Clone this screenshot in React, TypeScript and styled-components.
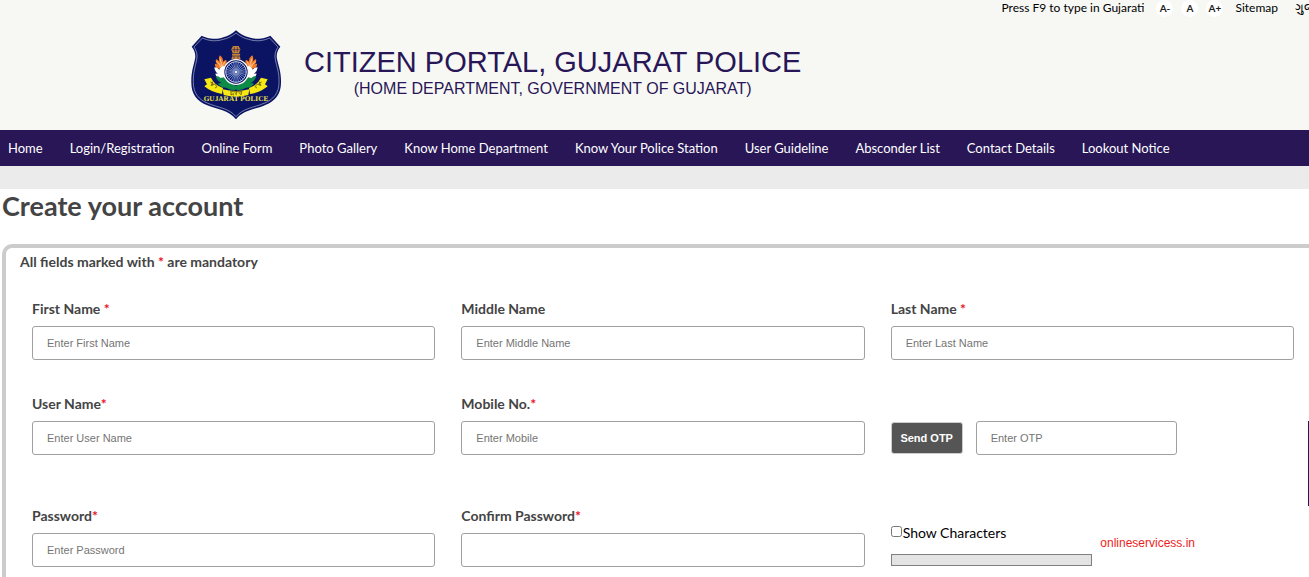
import React from "react";
import styled, { createGlobalStyle } from "styled-components";

const GlobalStyle = createGlobalStyle`
  *, *::before, *::after { box-sizing: border-box; }
  body {
    margin: 0;
    background: #fff;
    color: #000;
    font-family: Lato, "Noto Sans", sans-serif;
    font-size: 14px;
    overflow-x: hidden;
  }
`;

const navy = "#281657";

const Page = styled.div`
  overflow: hidden;
`;

const Header = styled.header`
  height: 130px;
  background: #f7f8f4;
`;

const TopBar = styled.div`
  display: flex;
  justify-content: flex-end;
  align-items: center;
  height: 16px;
  font-size: 12px;
  line-height: 16px;
  white-space: nowrap;
`;

const SizeButtons = styled.div`
  display: flex;
  gap: 8px;
  margin: 0 12px 0 12px;
`;

const SizeButton = styled.button`
  width: 17px;
  height: 17px;
  padding: 0;
  border: 0;
  border-radius: 50%;
  background: #fff;
  color: #222;
  font-family: inherit;
  font-size: 10px;
  font-weight: 700;
  line-height: 17px;
`;

const TopLink = styled.a`
  color: #000;
  text-decoration: none;
`;

const Language = styled(TopLink)`
  width: 14px;
  margin-left: 17px;
  overflow: hidden;
`;

const Brand = styled.div`
  display: flex;
  gap: 22px;
  padding: 12px 0 0 190px;
`;

const BrandText = styled.div`
  padding-top: 16px;
  color: ${navy};
  font-family: "Liberation Sans", sans-serif;
  text-align: center;
  white-space: nowrap;
`;

const BrandTitle = styled.div`
  font-size: 29px;
  line-height: 36px;
`;

const BrandSubtitle = styled.div`
  font-size: 16px;
  line-height: 18px;
`;

const Nav = styled.nav`
  display: flex;
  gap: 27px;
  height: 36px;
  padding-left: 8px;
  background: ${navy};
`;

const NavLink = styled.a`
  color: #fff;
  font-size: 13px;
  line-height: 36px;
  text-decoration: none;
  white-space: nowrap;
`;

const Strip = styled.div`
  height: 23px;
  background: #ebebeb;
`;

const Title = styled.h1`
  margin: 0 0 21px 2px;
  color: #444;
  font-size: 27px;
  font-weight: 700;
  line-height: 34px;
`;

const Panel = styled.form`
  margin-left: 2px;
  padding: 4px 15px 10px 26px;
  border: 4px solid #ccc;
  border-right: 0;
  border-bottom: 0;
  border-top-left-radius: 10px;
`;

const Note = styled.p`
  margin: 0 0 27px -12px;
  color: #444;
  font-size: 14px;
  font-weight: 700;
  line-height: 20px;
`;

const Required = styled.span`
  color: #e8142b;
`;

const Row = styled.div<{ $gap?: number }>`
  display: grid;
  grid-template-columns: repeat(3, 1fr);
  column-gap: 26px;
  margin-bottom: ${(p) => p.$gap ?? 0}px;
`;

const Field = styled.div`
  display: flex;
  flex-direction: column;
`;

const Label = styled.label`
  height: 27px;
  color: #444;
  font-weight: 700;
  line-height: 20px;
`;

const Input = styled.input`
  width: 100%;
  height: 34px;
  padding: 0 14px;
  border: 1px solid #a0a0a0;
  border-radius: 3px;
  background: #fff;
  font-family: "Liberation Sans", sans-serif;
  font-size: 11px;

  &::placeholder { color: #757575; }
`;

const OtpGroup = styled.div`
  display: flex;
  align-items: center;
  align-self: end;
  gap: 13px;
`;

const OtpButton = styled.button`
  width: 72px;
  height: 32px;
  padding: 0;
  border: 1px solid #ccc;
  border-radius: 3px;
  background: #555;
  color: #fff;
  font-family: "Liberation Sans", sans-serif;
  font-size: 11px;
  font-weight: 700;
`;

const OtpInput = styled(Input)`
  width: 50%;
`;

const Options = styled.div`
  display: flex;
  padding-top: 18px;
  gap: 8px;
`;

const StrengthGroup = styled.div`
  width: 50%;
`;

const CheckLabel = styled.label`
  display: flex;
  height: 30px;
  line-height: 18px;
`;

const Checkbox = styled.input`
  width: 11px;
  height: 11px;
  margin: 2px 1px 0 0;
`;

const StrengthBar = styled.div`
  height: 12px;
  border: 1px solid #808080;
  background: #e3e3e3;
`;

const SiteLink = styled.a`
  padding-top: 10px;
  color: #ed1c24;
  font-family: "Liberation Sans", sans-serif;
  font-size: 12px;
  line-height: 18px;
  text-decoration: none;
`;

const SideTab = styled.div`
  position: absolute;
  top: 421px;
  right: 0;
  width: 1px;
  height: 85px;
  background: ${navy};
`;

const spokes = Array.from({ length: 24 }, (_, i) => (i * Math.PI) / 12);

const WreathSide = () => (
  <g>
    <path fill="#f47b20" d="M119 94Q130 101 129 113Q135 107 139 108Q142 120 133 130L122 135L112 133Q103 127 105 119Q110 119 113 123Q105 115 108 106Q114 107 118 113Q114 102 119 94Z" />
    <path stroke="#fff3e4" strokeWidth="2" fill="none" d="M120 104q5 10 4 24M110 112q9 8 13 18M135 113q-7 8-9 18" />
    <path fill="#fff" d="M103 130Q112 130 118 137Q120 129 132 126Q136 134 132 144Q132 154 138 164L126 166Q108 160 106 149Q111 148 115 151Q104 142 103 130Z" />
    <path fill="#0d8b48" d="M107 156Q116 156 122 162L132 160Q139 172 151 178L176 189L164 199Q148 198 138 191Q122 191 114 179Q120 176 126 178Q110 170 107 156Z" />
  </g>
);

const Logo = () => (
  <svg width="92" height="94" viewBox="30 12 276 282" role="img" aria-label="Gujarat Police crest">
    <path
      fill="#0b1463"
      d="M168 19C156 29 143 38 130 40C103 50 76 41 65 35L35 68C43 78 48 90 45 105C41 125 33 145 34 176C34 210 51 231 80 243C111 257 146 257 168 286C190 257 225 257 256 243C285 231 303 210 303 176C304 145 295 125 291 105C288 90 293 78 301 68L271 35C260 41 233 50 206 40C193 38 180 29 168 19Z"
    />
    <path
      fill="none"
      stroke="#aab2d0"
      strokeWidth="2"
      d="M168 27C153 39 143 43 130 46C103 55 80 48 67 42L42 69C50 81 53 92 50 107C46 128 39 145 40 176C40 207 56 227 84 238C114 251 147 252 168 278C189 252 222 251 252 238C280 227 297 207 297 176C298 145 290 128 286 107C283 92 286 81 294 69L269 42C256 48 233 55 206 46C193 43 183 39 168 27Z"
    />
    <g fill="#c5833a">
      <path d="M159 66h17l5 10-4 12h-19l-4-12z" />
      <path d="M156 89h25l-2 7 3 10h-28l3-10z" />
    </g>
    <path stroke="#3a264e" strokeWidth="2" d="M155 77h26M163 69v15M172 69v15M155 96h26M162 97v7M174 97v7" />
    <WreathSide />
    <g transform="translate(336 0) scale(-1 1)">
      <WreathSide />
    </g>
    <circle cx="168" cy="144" r="37" fill="#0b1463" stroke="#fff" strokeWidth="4" />
    <circle cx="168" cy="144" r="31" fill="#0b1f78" stroke="#c9d1ea" strokeWidth="3" />
    <g stroke="#aab8e0" strokeWidth="2">
      {spokes.map((a) => (
        <line key={a} x1={168 + 5 * Math.cos(a)} y1={144 + 5 * Math.sin(a)} x2={168 + 30 * Math.cos(a)} y2={144 + 30 * Math.sin(a)} />
      ))}
    </g>
    <circle cx="168" cy="144" r="4" fill="#e6ebf7" />
    <path fill="#f5e813" d="M73 166L93 161Q103 183 129 192L126 210Q94 205 73 187L81 181ZM263 166L243 161Q233 183 207 192L210 210Q242 205 263 187L255 181Z" />
    <path fill="#f5e813" d="M128 196Q168 206 208 196L205 213Q168 222 131 213Z" />
    <path stroke="#453b17" strokeWidth="2" fill="none" d="M91 174l8 3-3 7 8-4 7 8-6 4M98 173l-5 13M245 174l-8 3 3 7-8-4-7 8 6 4M238 173l5 13M151 203h36M153 204v9l7-4v5M169 203v9l-5-5M176 205l7 7M184 203v9" />
    <text x="168" y="231" textAnchor="middle" fill="#eee548" fontFamily="Liberation Serif, serif" fontSize="22" fontWeight="700" textRendering="geometricPrecision">
      GUJARAT POLICE
    </text>
  </svg>
);

const navItems = [
  "Home",
  "Login/Registration",
  "Online Form",
  "Photo Gallery",
  "Know Home Department",
  "Know Your Police Station",
  "User Guideline",
  "Absconder List",
  "Contact Details",
  "Lookout Notice",
];

type TextFieldProps = {
  id: string;
  label: string;
  placeholder?: string;
  mark?: React.ReactNode;
  type?: string;
};

const TextField = ({ id, label, placeholder, mark, type = "text" }: TextFieldProps) => (
  <Field>
    <Label htmlFor={id}>
      {label}
      {mark}
    </Label>
    <Input id={id} type={type} placeholder={placeholder} />
  </Field>
);

const star = <Required>*</Required>;
const spacedStar = <Required> *</Required>;

export default function App() {
  return (
    <Page>
      <GlobalStyle />
      <Header>
        <TopBar>
          <span>Press F9 to type in Gujarati</span>
          <SizeButtons>
            <SizeButton type="button">A-</SizeButton>
            <SizeButton type="button">A</SizeButton>
            <SizeButton type="button">A+</SizeButton>
          </SizeButtons>
          <TopLink href="#sitemap">Sitemap</TopLink>
          <Language href="#gu" lang="gu">ગુજરાતી</Language>
        </TopBar>
        <Brand>
          <Logo />
          <BrandText>
            <BrandTitle>CITIZEN PORTAL, GUJARAT POLICE</BrandTitle>
            <BrandSubtitle>(HOME DEPARTMENT, GOVERNMENT OF GUJARAT)</BrandSubtitle>
          </BrandText>
        </Brand>
      </Header>
      <Nav>
        {navItems.map((item) => (
          <NavLink key={item} href="#">{item}</NavLink>
        ))}
      </Nav>
      <Strip />
      <main>
        <Title>Create your account</Title>
        <Panel>
          <Note>All fields marked with <Required>*</Required> are mandatory</Note>
          <Row $gap={34}>
            <TextField id="first" label="First Name" mark={spacedStar} placeholder="Enter First Name" />
            <TextField id="middle" label="Middle Name" placeholder="Enter Middle Name" />
            <TextField id="last" label="Last Name" mark={spacedStar} placeholder="Enter Last Name" />
          </Row>
          <Row $gap={51}>
            <TextField id="user" label="User Name" mark={star} placeholder="Enter User Name" />
            <TextField id="mobile" label="Mobile No." mark={star} placeholder="Enter Mobile" />
            <OtpGroup>
              <OtpButton type="button">Send OTP</OtpButton>
              <OtpInput aria-label="OTP" placeholder="Enter OTP" />
            </OtpGroup>
          </Row>
          <Row>
            <TextField id="password" label="Password" mark={star} type="password" placeholder="Enter Password" />
            <TextField id="confirm" label="Confirm Password" mark={star} type="password" />
            <Options>
              <StrengthGroup>
                <CheckLabel>
                  <Checkbox type="checkbox" />
                  Show Characters
                </CheckLabel>
                <StrengthBar />
              </StrengthGroup>
              <SiteLink href="#">onlineservicess.in</SiteLink>
            </Options>
          </Row>
        </Panel>
      </main>
      <SideTab />
    </Page>
  );
}
